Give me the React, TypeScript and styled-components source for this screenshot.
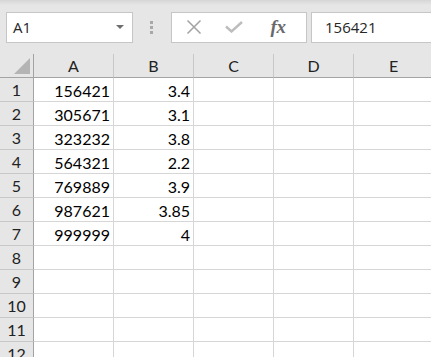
import styled, { createGlobalStyle } from "styled-components";

const GlobalStyle = createGlobalStyle`
  html, body {
    margin: 0;
    padding: 0;
    background: #ffffff;
    overflow: hidden;
  }
`;

const Page = styled.div`
  width: 431px;
  height: 357px;
  overflow: hidden;
  background: #ffffff;
`;

const Toolbar = styled.div`
  height: 54px;
  display: flex;
  align-items: center;
  padding-left: 6px;
  box-sizing: border-box;
  background: linear-gradient(#d6d6d6 0, #e6e6e6 5px, #e6e6e6 100%);
`;

const NameBox = styled.div`
  width: 127px;
  height: 31px;
  box-sizing: border-box;
  border: 1px solid #c6c6c6;
  background: #fff;
  display: flex;
  align-items: center;
  justify-content: space-between;
  padding: 0 8px 0 6px;
  font-family: "Open Sans", sans-serif;
  font-size: 15px;
  color: #262626;
`;

const Caret = styled.span`
  width: 0;
  height: 0;
  border-left: 4px solid transparent;
  border-right: 4px solid transparent;
  border-top: 4px solid #6e6e6e;
`;

const Grip = styled.div`
  display: flex;
  flex-direction: column;
  gap: 2px;
  margin: 0 18px 0 17px;
`;

const GripDot = styled.span`
  width: 3px;
  height: 3px;
  background: #a8a8a8;
`;

const Buttons = styled.div`
  width: 136px;
  height: 31px;
  box-sizing: border-box;
  border: 1px solid #c6c6c6;
  background: #fff;
  display: flex;
  align-items: center;
  padding-left: 13px;
`;

const IconSlot = styled.span<{ $w: number; $gap?: number }>`
  width: ${({ $w }) => $w}px;
  margin-left: ${({ $gap }) => $gap ?? 0}px;
  display: flex;
  align-items: center;
  justify-content: center;
`;

const Fx = styled.span`
  font-family: "Liberation Serif", serif;
  font-style: italic;
  font-weight: bold;
  font-size: 19px;
  color: #6a6a6a;
  letter-spacing: -0.5px;
`;

const FormulaInput = styled.div`
  flex: 1;
  height: 31px;
  margin-left: 4px;
  box-sizing: border-box;
  border: 1px solid #c6c6c6;
  border-right: none;
  background: #fff;
  display: flex;
  align-items: center;
  padding-left: 13px;
  font-family: "Open Sans", sans-serif;
  font-size: 15px;
  color: #262626;
`;

const Sheet = styled.div`
  display: grid;
  grid-template-columns: 34px repeat(5, 80px);
  grid-auto-rows: 24px;
  font-family: "Lato", "Liberation Sans", sans-serif;
  font-size: 16px;
  color: #000;
`;

const Corner = styled.div`
  background: #e6e6e6;
  border-right: 1px solid #a3a3a3;
  border-bottom: 1px solid #a3a3a3;
  display: flex;
  align-items: flex-end;
  justify-content: flex-end;
  padding: 0 3px 3px 0;
`;

const ColHeader = styled.div`
  background: #e6e6e6;
  border-right: 1px solid #c8c8c8;
  border-bottom: 1px solid #a3a3a3;
  display: flex;
  align-items: center;
  justify-content: center;
  color: #222;
`;

const RowHeader = styled.div`
  background: #e6e6e6;
  border-right: 1px solid #a3a3a3;
  border-bottom: 1px solid #c8c8c8;
  display: flex;
  align-items: center;
  justify-content: center;
  color: #222;
`;

const Cell = styled.div<{ $align?: "left" | "right" }>`
  border-right: 1px solid #d6d6d6;
  border-bottom: 1px solid #d6d6d6;
  display: flex;
  align-items: center;
  justify-content: ${({ $align }) => ($align === "right" ? "flex-end" : "flex-start")};
  padding: 1px 3px 0 3px;
  white-space: nowrap;
  overflow: hidden;
`;

const columns = ["A", "B", "C", "D", "E"];

const data: [string, string][] = [
  ["156421", "3.4"],
  ["305671", "3.1"],
  ["323232", "3.8"],
  ["564321", "2.2"],
  ["769889", "3.9"],
  ["987621", "3.85"],
  ["999999", "4"],
];

const rowCount = 12;

export default function App() {
  return (
    <Page>
      <GlobalStyle />
      <Toolbar>
        <NameBox>
          <span>A1</span>
          <Caret />
        </NameBox>
        <Grip>
          <GripDot />
          <GripDot />
          <GripDot />
        </Grip>
        <Buttons>
          <IconSlot $w={18}>
            <svg width="16" height="14" viewBox="0 0 16 14">
              <path d="M1.5 0.5 L14.5 13.5 M14.5 0.5 L1.5 13.5" stroke="#a3a3a3" strokeWidth="1.5" fill="none" />
            </svg>
          </IconSlot>
          <IconSlot $w={28} $gap={17}>
            <svg width="18" height="12" viewBox="0 0 18 12">
              <path d="M1 5.5 L6.5 10.5 L17 1" stroke="#bdbdbd" strokeWidth="2.4" fill="none" />
            </svg>
          </IconSlot>
          <IconSlot $w={22} $gap={19}>
            <Fx>fx</Fx>
          </IconSlot>
        </Buttons>
        <FormulaInput>156421</FormulaInput>
      </Toolbar>
      <Sheet>
        <Corner>
          <svg width="16" height="16" viewBox="0 0 16 16">
            <polygon points="16,0 16,16 0,16" fill="#b4b4b4" />
          </svg>
        </Corner>
        {columns.map((c) => (
          <ColHeader key={c}>{c}</ColHeader>
        ))}
        {Array.from({ length: rowCount }, (_, i) => {
          const row = data[i];
          return [
            <RowHeader key={`h${i}`}>{i + 1}</RowHeader>,
            ...columns.map((c, j) => (
              <Cell key={`${c}${i}`} $align="right">
                {row && j < 2 ? row[j] : ""}
              </Cell>
            )),
          ];
        })}
      </Sheet>
    </Page>
  );
}
